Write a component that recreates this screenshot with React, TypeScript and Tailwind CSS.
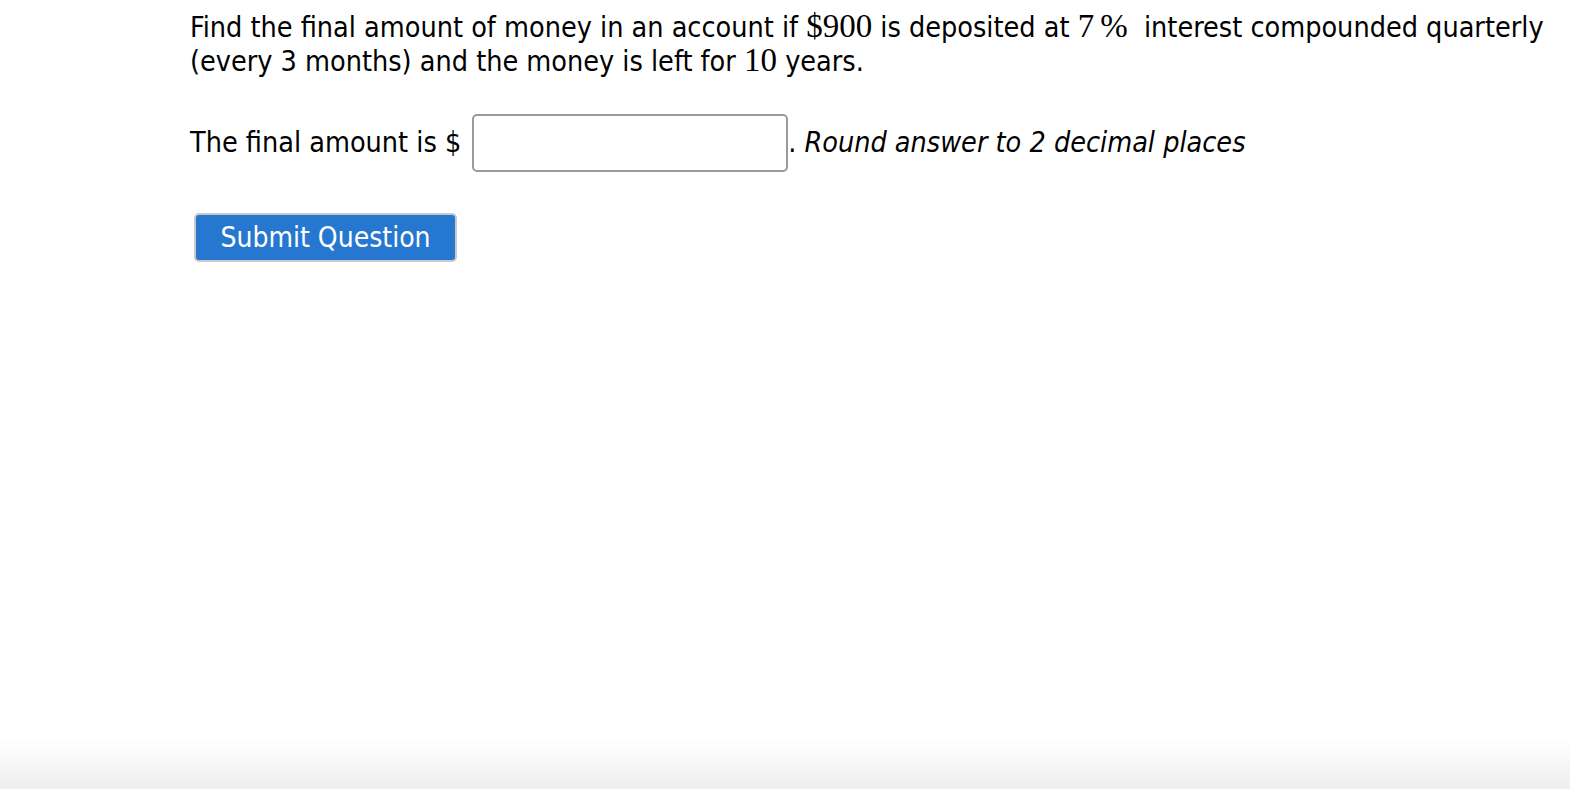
const App = () => {
  return (
    <div className="relative h-[789px] w-full overflow-hidden bg-white text-black" style={{ fontFamily: '"DejaVu Sans Condensed", "DejaVu Sans", sans-serif' }}>
      <div className="pl-[190px] pt-[11px] text-[28.5px] leading-[34px]">
        <p>
          Find the final amount of money in an account if{" "}
          <span className="font-['Liberation_Serif',serif] text-[33px] leading-[20px]">$900</span> is deposited at{" "}
          <span className="font-['Liberation_Serif',serif] text-[33px] leading-[20px]">
            7<span className="ml-[6px]">%</span>
          </span>
          &nbsp; interest compounded quarterly
          <br />
          (every 3 months) and the money is left for{" "}
          <span className="font-['Liberation_Serif',serif] text-[33px] leading-[20px]">10</span> years.
        </p>
        <div className="mt-[35px] flex items-center">
          <span>The final amount is $</span>
          <input
            type="text"
            className="ml-[11px] h-[58px] w-[316px] rounded-[5px] border-2 border-[#9a9a9a] bg-white outline-none"
          />
          <span>.</span>
          <span className="ml-[8px] italic">Round answer to 2 decimal places</span>
        </div>
        <div className="mt-[41px] pl-[4px]">
          <button className="h-[49px] w-[263px] rounded-[5px] border-2 border-[#c9c9c9] bg-[#2677d0] text-[28px] text-white">
            Submit Question
          </button>
        </div>
      </div>
      <div className="absolute bottom-0 left-0 h-[50px] w-full bg-gradient-to-b from-white to-[#eeeeee]" />
    </div>
  );
};

export default App;
